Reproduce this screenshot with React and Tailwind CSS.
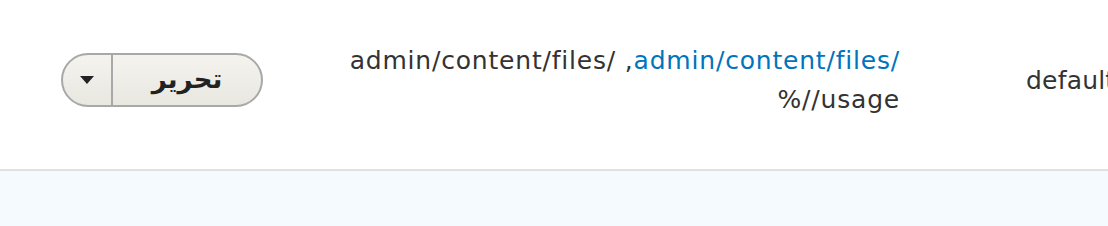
const font = { fontFamily: '"DejaVu Sans", "Noto Sans", sans-serif' };

export default function App() {
  return (
    <div className="w-[1108px] h-[226px] overflow-hidden bg-[#f5fafe]" style={font}>
      <div className="h-[171px] pb-[9px] bg-white border-b-2 border-[#e2e2dc] flex items-center pl-[61px] text-[#333]">
        {/* operations */}
        <div dir="rtl" className="shrink-0 flex h-[54px] w-[202px] rounded-full border-2 border-[#a8a8a8] bg-gradient-to-b from-[#f4f3ee] to-[#e8e7e0] overflow-hidden">
          <button className="flex-1 flex items-center justify-center font-bold text-[26px] text-[#222] pb-[2px]" style={font}>
            تحرير
          </button>
          <span className="w-[50px] border-r-2 border-[#a8a8a8] flex items-center justify-center">
            <svg width="14" height="8" viewBox="0 0 14 8"><path d="M0 0h14L7 8z" fill="#222" /></svg>
          </span>
        </div>
        {/* path column */}
        <div className="flex-1 text-right text-[25px] leading-[39px] tracking-[0.8px] whitespace-nowrap">
          <div>
            <span>admin/content/files/ ,</span>
            <a href="#" className="text-[#0074bd]">admin/content/files/</a>
          </div>
          <div>%//usage</div>
        </div>
        <div className="w-[126px] shrink-0" />
        {/* machine name, clipped */}
        <div className="w-[82px] shrink-0 overflow-hidden whitespace-nowrap text-[25px] tracking-[0.2px] pt-[1px]">
          default
        </div>
      </div>
    </div>
  );
}
